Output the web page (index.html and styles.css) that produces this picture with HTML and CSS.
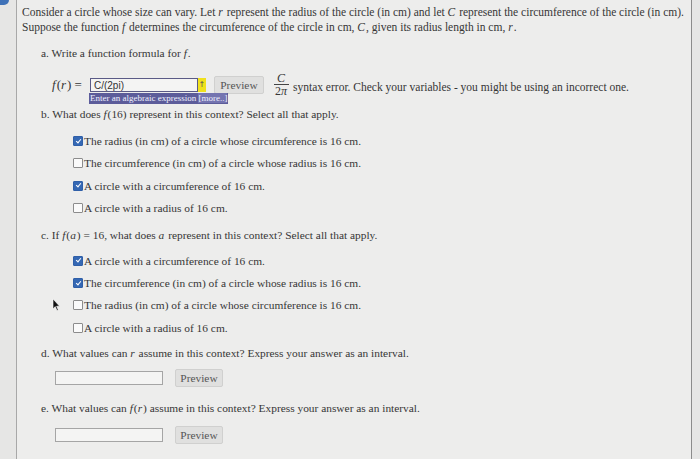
FILE: index.html
```html
<!DOCTYPE html>
<html lang="en">

<head>
    <meta charset="UTF-8">
    <title>Circle circumference function</title>
    <link rel="stylesheet" href="styles.css">
</head>

<body>
    <div class="corner"></div>
    <div class="frame">
        <p class="intro">Consider a circle whose size can vary. Let <i>r</i> represent the radius of the circle (in cm) and let <i>C</i> represent the circumference of the circle (in cm).<br>Suppose the function <i>f</i> determines the circumference of the circle in cm, <i>C</i>, given its radius length in cm, <i>r</i>.</p>

        <p class="part part-a">a. Write a function formula for <i>f</i>.</p>

        <div class="answer-row formula">
            <span class="math"><i>f</i>(<i>r</i>)&nbsp;=</span>
            <span class="field">
                <input class="answer focused" type="text" value="C/(2pi)">
                <span class="hint">&#8593;</span>
                <span class="tip">Enter an algebraic expression <span class="more">[more..]</span></span>
            </span>
            <button class="preview">Preview</button>
            <span class="frac"><i>C</i><span class="den">2<i>&pi;</i></span></span>
            <span class="msg">syntax error. Check your variables - you might be using an incorrect one.</span>
        </div>

        <p class="part part-b">b. What does <i>f</i>(16) represent in this context? Select all that apply.</p>
        <div class="opts opts-b">
            <label class="opt"><span class="box checked"></span>The radius (in cm) of a circle whose circumference is 16 cm.</label>
            <label class="opt"><span class="box"></span>The circumference (in cm) of a circle whose radius is 16 cm.</label>
            <label class="opt"><span class="box checked"></span>A circle with a circumference of 16 cm.</label>
            <label class="opt"><span class="box"></span>A circle with a radius of 16 cm.</label>
        </div>

        <p class="part part-c">c. If <i>f</i>(<i>a</i>) = 16, what does <i>a</i> represent in this context? Select all that apply.</p>
        <div class="opts opts-c">
            <label class="opt"><span class="box checked"></span>A circle with a circumference of 16 cm.</label>
            <label class="opt"><span class="box checked"></span>The circumference (in cm) of a circle whose radius is 16 cm.</label>
            <label class="opt"><span class="box"></span>The radius (in cm) of a circle whose circumference is 16 cm.
                <svg class="cursor" width="8" height="12" viewBox="0 0 8 12"><path d="M1 0 L1 10 L3.2 7.6 L5 11.5 L6.3 10.9 L4.6 7.2 L7.6 7.2 Z" fill="#111" stroke="#fff" stroke-width="0.6"/></svg>
            </label>
            <label class="opt"><span class="box"></span>A circle with a radius of 16 cm.</label>
        </div>

        <p class="part part-d">d. What values can <i>r</i> assume in this context? Express your answer as an interval.</p>
        <div class="answer-row interval">
            <input class="answer" type="text">
            <button class="preview">Preview</button>
        </div>

        <p class="part part-e">e. What values can <i>f</i>(<i>r</i>) assume in this context? Express your answer as an interval.</p>
        <div class="answer-row interval">
            <input class="answer" type="text">
            <button class="preview">Preview</button>
        </div>
    </div>
</body>

</html>
```

FILE: styles.css
```css
body {
    margin: 0;
    background: #e6e6e5;
    font-family: "Liberation Serif", "Times New Roman", serif;
    font-size: 11.4px;
    color: #363636;
    overflow: hidden;
}

i {
    padding-right: 1px;
}

.corner {
    position: absolute;
    left: 0;
    top: 0;
    width: 9px;
    height: 5px;
    background: #3f72b8;
    border-bottom-right-radius: 8px;
}

.frame {
    margin-left: 16px;
    width: 676px;
    height: 459px;
    border-left: 1px solid #a8a8a8;
    border-right: 1px solid #8c8c8c;
    background: #ededec;
    padding-left: 5px;
    box-sizing: border-box;
}

p {
    margin: 0;
    line-height: 15px;
}

.intro {
    padding-top: 5px;
    font-size: 11.5px;
    white-space: nowrap;
}

.part {
    padding-left: 19px;
}

.part-a {
    margin-top: 11px;
}

.part-b {
    margin-top: 11px;
}

.part-c {
    margin-top: 9px;
}

.part-d {
    margin-top: 7px;
}

.part-e {
    margin-top: 14px;
}

.answer-row {
    display: flex;
    align-items: center;
}

.formula {
    margin-top: 13px;
    height: 22px;
    padding-left: 30px;
}

.math {
    font-size: 13px;
    margin-right: 8px;
}

.field {
    position: relative;
    display: flex;
    align-items: center;
}

.answer {
    width: 108px;
    height: 14px;
    box-sizing: border-box;
    border: 1px solid #a5a5a5;
    background: #f4f4f3;
    padding: 0 3px;
    font-family: "Liberation Sans", Arial, sans-serif;
    font-size: 10px;
    color: #333;
}

.answer.focused {
    width: 108px;
    border-color: #5a5a86;
}

.hint {
    width: 8px;
    height: 14px;
    background: #f0e11c;
    font-family: "DejaVu Sans", sans-serif;
    font-size: 8px;
    line-height: 14px;
    text-align: center;
    color: #555;
}

.tip {
    position: absolute;
    left: -1px;
    top: 15px;
    background: #5c5c9a;
    color: #f0f0ff;
    font-size: 9px;
    line-height: 11px;
    padding: 0 1px;
    white-space: nowrap;
}

.more {
    background: #7474b0;
}

.preview {
    height: 18px;
    padding: 0 4px;
    background: #e0e0df;
    border: 1px solid #d0d0cf;
    border-radius: 2px;
    font-family: "Liberation Serif", serif;
    font-size: 11.4px;
    color: #555;
}

.formula .preview {
    margin-left: 8px;
    width: 50px;
}

.frac {
    display: inline-flex;
    flex-direction: column;
    align-items: center;
    margin-left: 10px;
    font-size: 12px;
    line-height: 11px;
}

.den {
    border-top: 1px solid #444;
    padding: 1px 1px 0;
}

.msg {
    margin-left: 4px;
    margin-top: 3px;
    font-size: 11.5px;
}

.opts {
    padding-left: 51px;
}

.opts-b {
    margin-top: 8px;
}

.opts-c {
    margin-top: 6.5px;
}

.opt {
    position: relative;
    display: flex;
    align-items: center;
    height: 22.3px;
}

.box {
    width: 10px;
    height: 10px;
    box-sizing: border-box;
    border: 1px solid #8c8c8c;
    border-radius: 1px;
    background: #fafafa;
    margin-right: 1px;
}

.box.checked {
    border-color: #2f5fa8;
    background: #3568b4;
    position: relative;
}

.box.checked::after {
    content: "";
    position: absolute;
    left: 2.5px;
    top: 0.5px;
    width: 2px;
    height: 4px;
    border: solid #fff;
    border-width: 0 1.5px 1.5px 0;
    transform: rotate(40deg);
}

.cursor {
    position: absolute;
    left: -21px;
    top: 5px;
}

.interval {
    margin-top: 8px;
    padding-left: 33px;
    height: 18px;
}

.interval .preview {
    margin-left: 12px;
    width: 48px;
}

.part-e + .interval {
    margin-top: 10px;
}
```
